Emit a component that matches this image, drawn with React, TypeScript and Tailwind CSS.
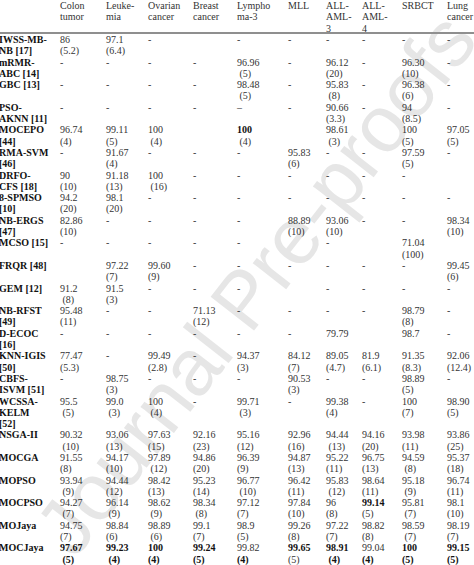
import React from 'react';

type Row = {
  label: string[];
  cells: string[];
};

const headers: string[][] = [
  ["Colon", "tumor"],
  ["Leuke-", "mia"],
  ["Ovarian", "cancer"],
  ["Breast", "cancer"],
  ["Lympho", "ma-3"],
  ["MLL"],
  ["ALL-", "AML-", "3"],
  ["ALL-", "AML-", "4"],
  ["SRBCT"],
  ["Lung", "cancer"],
];

// "|" splits lines, "*" marks a bold line, leading space = small indent
const rows: Row[] = [
  { label: ["IWSS-MB-", "NB [17]"], cells: ["86|(5.2)", "97.1|(6.4)", "-", "", "-", "-", "-", "-", "-", "-"] },
  { label: ["mRMR-", "ABC [14]"], cells: ["-", "-", "-", "-", "96.96| (5)", "-", "96.12|(20)", "-", "96.30|(10)", "-"] },
  { label: ["GBC [13]"], cells: ["-", "-", "-", "-", "98.48| (5)", "-", "95.83| (8)", "-", "96.38|(6)", "-"] },
  { label: ["PSO-", "AKNN [11]"], cells: ["-", "-", "-", "-", "–", "-", "90.66|(3.3)", "-", "94|(8.5)", "-"] },
  { label: ["MOCEPO", "[44]"], cells: ["96.74|(4)", "99.11|(5)", "100| (4)", "", "*100| (4)", "", "98.61| (3)", "", "100|(5)", "97.05|(5)"] },
  { label: ["RMA-SVM", "[46]"], cells: ["-", "91.67|(4)", "-", "-", "-", "95.83|(6)", "-", "-", "97.59|(5)", "-"] },
  { label: ["DRFO-", "CFS [18]"], cells: ["90|(10)", "91.18|(13)", "100| (16)", "-", "-", "-", "-", "-", "-", ""] },
  { label: ["8-SPMSO", "[10]"], cells: ["94.2|(20)", "98.1|(20)", "-", "-", "-", "-", "-", "-", "-", "-"] },
  { label: ["NB-ERGS", "[47]"], cells: ["82.86|(10)", "-", "-", "-", "-", "88.89|(10)", "93.06|(10)", "-", "-", "98.34|(10)"] },
  { label: ["MCSO [15]"], cells: ["-", "-", "-", "-", "-", "", "-", "", "71.04|(100)", ""] },
  { label: ["FRQR [48]"], cells: ["", "97.22|(7)", "99.60|(9)", "-", "-", "-", "-", "-", "-", "99.45|(6)"] },
  { label: ["GEM [12]"], cells: ["91.2| (8)", "91.5|(3)", "-", "-", "-", "", "-", "-", "-", "-"] },
  { label: ["NB-RFST", "[49]"], cells: ["95.48|(11)", "-", "-", "71.13|(12)", "-", "-", "-", "-", "98.79|(8)", "-"] },
  { label: ["D-ECOC", "[16]"], cells: ["-", "-", "-", "-", "-", "-", "79.79", "", "98.7", "-"] },
  { label: ["KNN-IGIS", "[50]"], cells: ["77.47|(5.3)", "-", "99.49|(2.8)", "-", "94.37|(3)", "84.12|(7)", "89.05|(4.7)", "81.9|(6.1)", "91.35|(8.3)", "92.06|(12.4)"] },
  { label: ["CBFS-", "ISVM [51]"], cells: ["-", "98.75|(3)", "-", "-", "-", "90.53|(3)", "-", "-", "98.89|(5)", "-"] },
  { label: ["WCSSA-", "KELM", "[52]"], cells: ["95.5| (5)", "99.0| (3)", "100| (4)", "-", "99.71| (3)", "-", "99.38|(4)", "-", "100|(7)", "98.90|(5)"] },
  { label: ["NSGA-II"], cells: ["90.32| (10)", "93.06|(13)", "97.63|(15)", "92.16|(23)", "95.16|(12)", "92.96|(16)", "94.44| (13)", "94.16|(20)", "93.98|(11)", "93.86|(25)"] },
  { label: ["MOCGA"], cells: ["91.55|(8)", "94.17|(10)", "97.89| (12)", "94.86|(20)", "96.39|(9)", "94.87|(13)", "95.22|(11)", "96.75|(13)", "94.59| (8)", "95.37|(18)"] },
  { label: ["MOPSO"], cells: ["93.94| (9)", "94.44|(12)", "98.42|(13)", "95.23|(14)", "96.77| (10)", "96.42|(11)", "95.83| (12)", "98.64|(11)", "95.18| (9)", "96.74|(11)"] },
  { label: ["MOCPSO"], cells: ["94.27| (7)", "96.14| (9)", "98.62| (9)", "98.34| (8)", "97.12|(7)", "97.84|(10)", "96|(8)", "*99.14|(5)", "95.81| (7)", "98.1|(10)"] },
  { label: ["MOJaya"], cells: ["94.75|(7)", "98.84|(6)", "98.89| (6)", "99.1|(7)", "98.9|(5)", "99.26|(8)", "97.22|(7)", "98.82|(8)", "98.59| (7)", "98.19|(7)"] },
  { label: ["MOCJaya"], cells: ["*97.67|* (5)", "*99.23|* (4)", "*100|*(4)", "*99.24|*(5)", "99.82|*(4)", "*99.65|(5)", "*98.91|* (4)", "99.04|*(4)", "*100|*(5)", "*99.15|*(5)"] },
];

function Cell({ value }: { value: string }) {
  if (!value) return <div />;
  return (
    <div className="flex flex-col">
      {value.split("|").map((line, i) => {
        const bold = line.startsWith("*");
        const text = bold ? line.slice(1) : line;
        return (
          <span
            key={i}
            className={bold ? "whitespace-pre font-bold text-[#111]" : "whitespace-pre"}
          >
            {text}
          </span>
        );
      })}
    </div>
  );
}

const grid =
  "grid grid-cols-[61px_46px_42px_45px_44px_51px_38px_36px_40px_45px_60px] ml-[-1px]";

export default function App() {
  return (
    <div className="relative w-[474px] h-[565px] overflow-hidden bg-white font-['Liberation_Serif',serif] text-[10px] leading-[11.3px] text-[#333]">
      {/* watermark */}
      <div className="pointer-events-none absolute left-[256px] top-[284px] -translate-x-1/2 -translate-y-1/2 -rotate-[52deg] whitespace-nowrap font-['Liberation_Sans',sans-serif] text-[80px] leading-none text-[#e6e6e6]">
        Journal Pre-proofs
      </div>

      <div className="relative">
        <div className={`${grid} h-[32px]`}>
          <div />
          {headers.map((h, i) => (
            <div key={i} className="flex flex-col">
              {h.map((line, j) => (
                <span key={j}>{line}</span>
              ))}
            </div>
          ))}
        </div>
        <div className="h-[2px] bg-[#8f8f8f]" />

        {rows.map((row, r) => (
          <div key={r} className={`${grid} min-h-[22.6px]`}>
            <div className="flex flex-col font-bold text-[#111]">
              {row.label.map((line, j) => (
                <span key={j} className="whitespace-nowrap">{line}</span>
              ))}
            </div>
            {row.cells.map((c, i) => (
              <Cell key={i} value={c} />
            ))}
          </div>
        ))}
      </div>
    </div>
  );
}
